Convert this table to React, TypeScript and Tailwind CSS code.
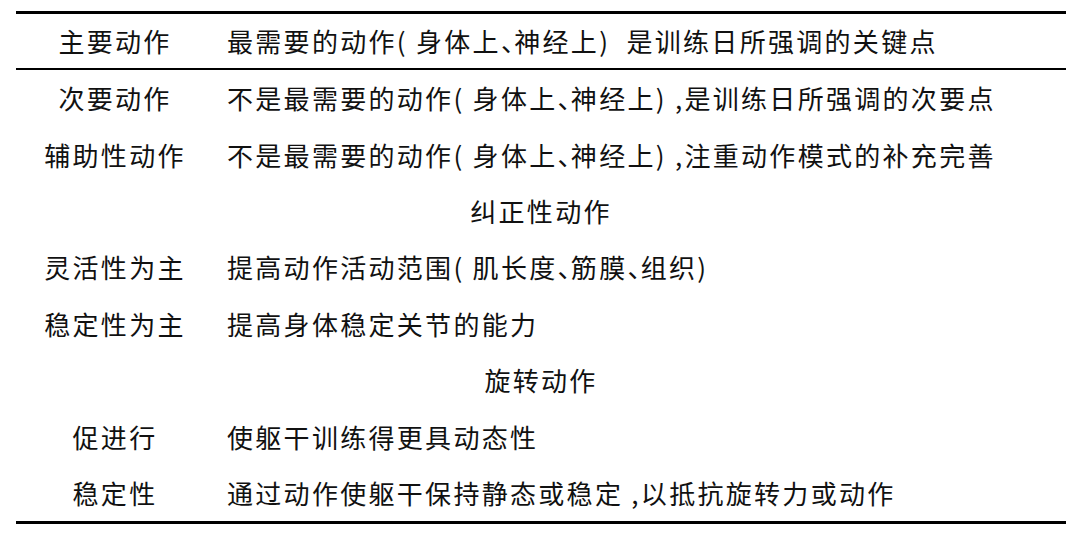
import React from "react";

type Row = { kind: "row"; label: string; text: string } | { kind: "head"; text: string };

const rows: Row[] = [
  { kind: "row", label: "次要动作", text: "不是最需要的动作( 身体上、神经上) ,是训练日所强调的次要点" },
  { kind: "row", label: "辅助性动作", text: "不是最需要的动作( 身体上、神经上) ,注重动作模式的补充完善" },
  { kind: "head", text: "纠正性动作" },
  { kind: "row", label: "灵活性为主", text: "提高动作活动范围( 肌长度、筋膜、组织)" },
  { kind: "row", label: "稳定性为主", text: "提高身体稳定关节的能力" },
  { kind: "head", text: "旋转动作" },
  { kind: "row", label: "促进行", text: "使躯干训练得更具动态性" },
  { kind: "row", label: "稳定性", text: "通过动作使躯干保持静态或稳定 ,以抵抗旋转力或动作" },
];

function Rich({ text }: { text: string }) {
  const parts = text.split("、");
  return (
    <>
      {parts.map((p, i) => (
        <React.Fragment key={i}>
          {p}
          {i < parts.length - 1 && <span className="tracking-[-12.7px]">、</span>}
        </React.Fragment>
      ))}
    </>
  );
}

function Line({ label, text, h }: { label: string; text: string; h: string }) {
  return (
    <div className={`flex items-center ${h}`}>
      <div className="w-[198px] text-center whitespace-pre">{label}</div>
      <div className="pl-[13px] whitespace-pre">
        <Rich text={text} />
      </div>
    </div>
  );
}

export default function App() {
  return (
    <div className="w-[1080px] h-[540px] bg-white overflow-hidden pt-[11px] pl-[16px] font-['Noto_Sans_CJK_SC',sans-serif] text-[26px] leading-none tracking-[2.3px] text-[#111]">
      <div className="w-[1050px] border-t-[3px] border-black">
        <Line label="主要动作" text="最需要的动作( 身体上、神经上)  是训练日所强调的关键点" h="h-[54px]" />
        <div className="border-t-2 border-black">
          {rows.map((r, i) =>
            r.kind === "row" ? (
              <Line key={i} label={r.label} text={r.text} h="h-[56.4px]" />
            ) : (
              <div key={i} className="h-[56.4px] flex items-center justify-center">
                {r.text}
              </div>
            )
          )}
        </div>
        <div className="border-t-[3px] border-black" />
      </div>
    </div>
  );
}
